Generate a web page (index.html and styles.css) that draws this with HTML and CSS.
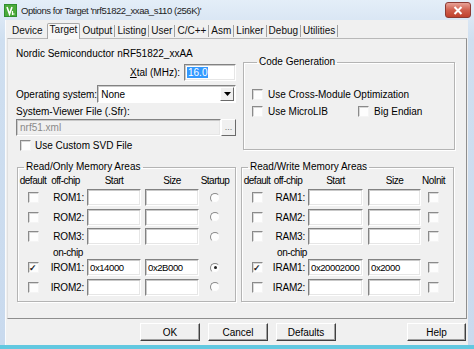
FILE: index.html
```html
<!DOCTYPE html>
<html lang="en">
<head>
  <meta charset="UTF-8">
  <title>Options for Target</title>
  <link rel="stylesheet" href="styles.css">
</head>
<body>
  <div class="window">
    <div class="titlebar">
      <svg class="app-icon" width="13" height="13" viewBox="0 0 13 13">
        <rect x="0" y="0" width="13" height="13" fill="#2f8f2f"/>
        <rect x="1" y="1" width="11" height="11" fill="#4caa3a"/>
        <path d="M3 3 L5.5 10 L8 3" stroke="#fff" stroke-width="1.6" fill="none"/>
        <path d="M8.5 7 L8.5 11 M8.5 10 L10.5 10" stroke="#fff" stroke-width="1.2" fill="none"/>
      </svg>
      <span class="title">Options for Target 'nrf51822_xxaa_s110 (256K)'</span>
      <div class="close">
        <svg width="10" height="9" viewBox="0 0 10 9"><path d="M1.5 1 L8.5 8 M8.5 1 L1.5 8" stroke="#fff" stroke-width="2"/></svg>
      </div>
    </div>

    <div class="client">
      <div class="tabs">
        <span class="tab no-sep">Device</span>
        <span class="tab active">Target</span>
        <span class="tab">Output</span>
        <span class="tab">Listing</span>
        <span class="tab">User</span>
        <span class="tab">C/C++</span>
        <span class="tab">Asm</span>
        <span class="tab">Linker</span>
        <span class="tab">Debug</span>
        <span class="tab">Utilities</span>
      </div>

      <div class="panel">
        <div class="top-row">
          <div class="device">
            <div class="line">Nordic Semiconductor nRF51822_xxAA</div>
            <div class="xtal-row">
              <span><u>X</u>tal (MHz):</span>
              <div class="edit xtal"><span class="sel">16.0</span></div>
            </div>
            <div class="os-row">
              <span>Operating system:</span>
              <div class="combo">
                <span class="combo-text">None</span>
                <span class="combo-btn"><svg width="7" height="4" viewBox="0 0 7 4"><path d="M0 0 H7 L3.5 4 Z" fill="#000"/></svg></span>
              </div>
            </div>
            <div class="line sfr-label">System-Viewer File (.Sfr):</div>
            <div class="sfr-row">
              <div class="edit disabled">nrf51.xml</div>
              <div class="browse">...</div>
            </div>
            <label class="check-row svd"><span class="cb"></span>Use Custom SVD File</label>
          </div>

          <fieldset class="group codegen">
            <legend>Code Generation</legend>
            <label class="check-row"><span class="cb"></span>Use Cross-Module Optimization</label>
            <div class="cg-row">
              <label class="check-row microlib"><span class="cb"></span>Use MicroLIB</label>
              <label class="check-row"><span class="cb"></span>Big Endian</label>
            </div>
          </fieldset>
        </div>

        <div class="mem-row">
          <fieldset class="group mem rom">
            <legend>Read/Only Memory Areas</legend>
            <div class="mem-grid">
              <span class="hd">default</span>
              <span class="hd">off-chip</span>
              <span class="hd field">Start</span>
              <span class="hd field">Size</span>
              <span class="hd">Startup</span>

              <span class="cell"><span class="cb"></span></span>
              <span class="name">ROM1:</span>
              <div class="edit field"></div>
              <div class="edit field"></div>
              <span class="cell"><span class="radio"></span></span>

              <span class="cell"><span class="cb"></span></span>
              <span class="name">ROM2:</span>
              <div class="edit field"></div>
              <div class="edit field"></div>
              <span class="cell"><span class="radio"></span></span>

              <span class="cell"><span class="cb"></span></span>
              <span class="name">ROM3:</span>
              <div class="edit field"></div>
              <div class="edit field"></div>
              <span class="cell"><span class="radio"></span></span>

              <span></span>
              <span class="onchip">on-chip</span>
              <span></span><span></span><span></span>

              <span class="cell"><span class="cb checked">&#10003;</span></span>
              <span class="name">IROM1:</span>
              <div class="edit field">0x14000</div>
              <div class="edit field">0x2B000</div>
              <span class="cell"><span class="radio on"></span></span>

              <span class="cell"><span class="cb"></span></span>
              <span class="name">IROM2:</span>
              <div class="edit field"></div>
              <div class="edit field"></div>
              <span class="cell"><span class="radio"></span></span>
            </div>
          </fieldset>

          <fieldset class="group mem ram">
            <legend>Read/Write Memory Areas</legend>
            <div class="mem-grid">
              <span class="hd">default</span>
              <span class="hd">off-chip</span>
              <span class="hd field">Start</span>
              <span class="hd field">Size</span>
              <span class="hd">NoInit</span>

              <span class="cell"><span class="cb"></span></span>
              <span class="name">RAM1:</span>
              <div class="edit field"></div>
              <div class="edit field"></div>
              <span class="cell"><span class="cb"></span></span>

              <span class="cell"><span class="cb"></span></span>
              <span class="name">RAM2:</span>
              <div class="edit field"></div>
              <div class="edit field"></div>
              <span class="cell"><span class="cb"></span></span>

              <span class="cell"><span class="cb"></span></span>
              <span class="name">RAM3:</span>
              <div class="edit field"></div>
              <div class="edit field"></div>
              <span class="cell"><span class="cb"></span></span>

              <span></span>
              <span class="onchip">on-chip</span>
              <span></span><span></span><span></span>

              <span class="cell"><span class="cb checked">&#10003;</span></span>
              <span class="name">IRAM1:</span>
              <div class="edit field">0x20002000</div>
              <div class="edit field">0x2000</div>
              <span class="cell"><span class="cb"></span></span>

              <span class="cell"><span class="cb"></span></span>
              <span class="name">IRAM2:</span>
              <div class="edit field"></div>
              <div class="edit field"></div>
              <span class="cell"><span class="cb"></span></span>
            </div>
          </fieldset>
        </div>
      </div>

      <div class="buttons">
        <button>OK</button>
        <button>Cancel</button>
        <button>Defaults</button>
        <button class="help">Help</button>
      </div>
    </div>
  </div>
</body>
</html>
```

FILE: styles.css
```css
body {
  margin: 0;
  width: 474px;
  height: 349px;
  overflow: hidden;
  font-family: "Liberation Sans", Arial, sans-serif;
  font-size: 10px;
  color: #000;
  background: #62c8e0;
}

.window {
  width: 474px;
  height: 345px;
  display: flex;
  flex-direction: column;
  background: linear-gradient(#e4eef8, #cfdff0 40px, #c9daee);
}

/* Title bar */
.titlebar {
  height: 20px;
  display: flex;
  align-items: center;
  padding: 0 3px 0 4px;
  flex-shrink: 0;
}

.app-icon {
  margin-right: 4px;
}

.title {
  font-size: 9.5px;
  color: #1e1e1e;
  letter-spacing: -0.45px;
  padding-top: 1px;
}

.close {
  margin-left: auto;
  width: 24px;
  height: 14px;
  border: 1px solid #8b3a33;
  border-radius: 3px;
  background: linear-gradient(#e7a196, #d0604e 50%, #c0402c);
  display: flex;
  align-items: center;
  justify-content: center;
}

/* Client area */
.client {
  flex: 1;
  margin: 0 6px 0 5px;
  background: #f0f0f0;
  display: flex;
  flex-direction: column;
  border-left: 1px solid #fafcfe;
}

.tabs {
  display: flex;
  align-items: flex-end;
  height: 16px;
  margin: 2px 0 0 2px;
  padding-left: 2px;
}

.tab {
  height: 12px;
  line-height: 12px;
  padding: 0 2px;
  border-right: 1px solid #a0a0a0;
  margin-bottom: 1px;
  color: #111;
}

.tab.no-sep {
  border-right: none;
  padding-right: 4px;
}

.tab.active {
  height: 15px;
  line-height: 12px;
  padding: 0 2px;
  margin-bottom: -1px;
  background: #f7f7f7;
  border: 1px solid #a8a8a8;
  border-bottom: none;
  border-radius: 2px 2px 0 0;
  position: relative;
  z-index: 1;
}

.panel {
  margin: 0 1px;
  border: 1px solid;
  border-color: #b8b8b8 #8e8e8e #8e8e8e #e0e0e0;
  padding: 8px 10px 0 8px;
  box-sizing: border-box;
  height: 281px;
}

.top-row {
  display: flex;
  gap: 7px;
}

.device {
  width: 220px;
}

.line {
  height: 14px;
  line-height: 14px;
}

.xtal-row {
  display: flex;
  justify-content: flex-end;
  align-items: center;
  gap: 4px;
  margin-top: 3px;
}

.os-row {
  display: flex;
  justify-content: space-between;
  align-items: center;
  margin-top: 4px;
  white-space: nowrap;
}

.sfr-label {
  margin-top: 2px;
}

.sfr-row {
  display: flex;
}

.edit {
  height: 17px;
  box-sizing: border-box;
  background: #fff;
  border: 1px solid;
  border-color: #828282 #fff #fff #828282;
  box-shadow: inset 1px 1px 0 #c9c9c9, inset -1px -1px 0 #e6e6e6;
  padding: 1px 3px;
  line-height: 13px;
  white-space: nowrap;
}

.xtal {
  width: 52px;
  padding-left: 2px;
}

.sel {
  background: #3399ff;
  color: #fff;
  padding: 0 1px;
}

.combo {
  width: 147px;
  height: 18px;
  box-sizing: border-box;
  background: #fff;
  border: 1px solid;
  border-color: #828282 #fff #fff #828282;
  box-shadow: inset 1px 1px 0 #c9c9c9;
  display: flex;
  align-items: center;
}

.combo-text {
  flex: 1;
  padding-left: 3px;
}

.combo-btn {
  width: 14px;
  height: 14px;
  margin-right: 1px;
  background: #f0f0f0;
  border: 1px solid;
  border-color: #fff #6a6a6a #6a6a6a #fff;
  box-sizing: border-box;
  display: flex;
  align-items: center;
  justify-content: center;
}

.disabled {
  width: 205px;
  background: #f0f0f0;
  color: #8a8a8a;
}

.browse {
  width: 15px;
  height: 17px;
  box-sizing: border-box;
  border: 1px solid;
  border-color: #fff #6a6a6a #6a6a6a #fff;
  background: #f0f0f0;
  font-size: 9px;
  color: #777;
  text-align: center;
  line-height: 15px;
}

.check-row {
  display: flex;
  align-items: center;
  height: 14px;
  white-space: nowrap;
}

.svd {
  margin: 2px 0 0 4px;
}

.cb {
  width: 9px;
  height: 9px;
  display: inline-flex;
  align-items: center;
  justify-content: center;
  background: #fdfdfd;
  border: 1px solid;
  border-color: #8a8a8a #f4f4f4 #f4f4f4 #8a8a8a;
  box-shadow: inset 1px 1px 0 #d8d8d8;
  margin-right: 4px;
  flex-shrink: 0;
  font-size: 9px;
  font-weight: bold;
  color: #222;
}

.radio {
  width: 8px;
  height: 8px;
  display: inline-flex;
  align-items: center;
  justify-content: center;
  border-radius: 50%;
  background: #fdfdfd;
  border: 1px solid;
  border-color: #8a8a8a #f0f0f0 #f0f0f0 #8a8a8a;
}

.radio.on::after {
  content: "";
  width: 3px;
  height: 3px;
  border-radius: 50%;
  background: #222;
}

/* Group boxes */
.group {
  margin: 0;
  border: 1px solid #b4b4b4;
  box-shadow: 1px 1px 0 #fff, inset 1px 1px 0 #fff;
  min-width: 0;
}

.group legend {
  padding: 0 2px;
  margin-left: 5px;
  line-height: 14px;
}

.codegen {
  width: 212px;
  height: 95px;
  box-sizing: border-box;
  margin-top: 8px;
  padding: 18px 0 0 8px;
}

.codegen .cb {
  margin-right: 5px;
}

.cg-row {
  display: flex;
  margin-top: 3px;
}

.microlib {
  width: 106px;
}

.mem-row {
  display: flex;
  gap: 5px;
  margin-top: 8px;
  margin-left: 1px;
}

.mem {
  height: 142px;
  box-sizing: border-box;
  padding: 0 1px;
}

.rom {
  width: 219px;
}

.ram {
  width: 213px;
}

.mem-grid {
  display: grid;
  grid-template-rows: 12.5px 17px 17px 17px 9px 17px 17px;
  row-gap: 2.5px;
  align-items: center;
}

.rom .mem-grid {
  grid-template-columns: 28px 37px 57px 58px 32px;
}

.ram .mem-grid {
  grid-template-columns: 28px 34px 58px 58px 25px;
}

.hd {
  justify-self: center;
  white-space: nowrap;
  letter-spacing: -0.5px;
}

.field {
  justify-self: end;
}

.rom .field {
  width: 54px;
}

.ram .field {
  width: 53px;
}

.ram .field:nth-child(5n+3) {
  width: 55px;
}

.hd.field {
  text-align: center;
}

.cell {
  display: flex;
  justify-content: center;
}

.cell .cb {
  margin-right: 0;
}

.name {
  text-align: right;
  white-space: nowrap;
  letter-spacing: -0.2px;
}

.onchip {
  padding-left: 6px;
  line-height: 9px;
  white-space: nowrap;
  letter-spacing: -0.4px;
}

.edit.field {
  padding-left: 2px;
  font-size: 9.5px;
  letter-spacing: -0.4px;
}

/* Buttons */
.buttons {
  display: flex;
  gap: 8px;
  padding: 4px 2px 0 134px;
}

button {
  width: 60px;
  height: 18px;
  padding: 0;
  font-family: inherit;
  font-size: 10px;
  background: #f0f0f0;
  border: 1px solid;
  border-color: #fff #404040 #404040 #fff;
  box-shadow: inset -1px -1px 0 #a0a0a0;
}

.help {
  margin-left: auto;
  width: 59px;
}
```
